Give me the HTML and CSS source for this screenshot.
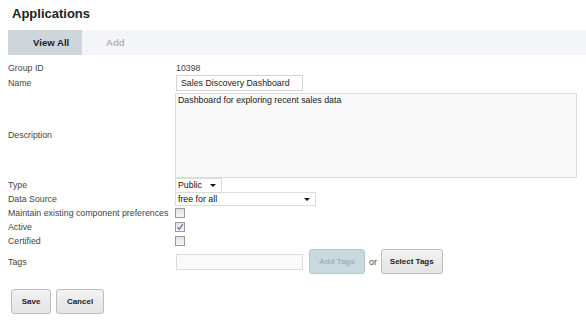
FILE: index.html
```html
<!DOCTYPE html>
<html lang="en">
<head>
    <meta charset="UTF-8">
    <title>Applications</title>
    <link rel="stylesheet" href="styles.css">
</head>
<body>
    <h2>Applications</h2>
    <div class="tabs">
        <a class="tab active">View All</a>
        <a class="tab">Add</a>
    </div>
    <form class="app-form">
        <div class="row">
            <label>Group ID</label>
            <span class="value">10398</span>
        </div>
        <div class="row row-name">
            <label for="name">Name</label>
            <input type="text" id="name" class="text-input" value="Sales Discovery Dashboard">
        </div>
        <div class="row row-desc">
            <label for="desc">Description</label>
            <textarea id="desc">Dashboard for exploring recent sales data</textarea>
        </div>
        <div class="row">
            <label>Type</label>
            <div class="select select-type">Public<span class="caret"></span></div>
        </div>
        <div class="row">
            <label>Data Source</label>
            <div class="select select-source">free for all<span class="caret"></span></div>
        </div>
        <div class="row row-check">
            <label>Maintain existing component preferences</label>
            <span class="checkbox"></span>
        </div>
        <div class="row row-check">
            <label>Active</label>
            <span class="checkbox"><svg width="8" height="8" viewBox="0 0 8 8"><path d="M1.5 4.2 L3.2 6.3 L6.8 1.2" fill="none" stroke="#4a5ea8" stroke-width="1.1"/></svg></span>
        </div>
        <div class="row row-check">
            <label>Certified</label>
            <span class="checkbox"></span>
        </div>
        <div class="row row-tags">
            <label for="tags">Tags</label>
            <input type="text" id="tags" class="tag-input">
            <button type="button" class="btn btn-disabled">Add Tags</button>
            <span class="or">or</span>
            <button type="button" class="btn">Select Tags</button>
        </div>
        <div class="actions">
            <button type="button" class="btn btn-save">Save</button>
            <button type="button" class="btn btn-cancel">Cancel</button>
        </div>
    </form>
</body>
</html>
```
FILE: styles.css
```css
body {
    font-family: "Liberation Sans", Arial, sans-serif;
    font-size: 8.8px;
    color: #444;
    margin: 0;
    padding: 0 0 0 8px;
    background: #fff;
}
h2 {
    margin: 0;
    padding: 6px 4px 0;
    font-size: 13px;
    line-height: 16px;
    color: #222;
}
.tabs {
    display: flex;
    height: 25px;
    margin-top: 8px;
    background: #f4f5f9;
}
.tab {
    display: flex;
    align-items: center;
    padding-left: 24px;
    font-size: 9.6px;
    font-weight: bold;
    color: #b2b2b2;
}
.tab.active {
    box-sizing: border-box;
    width: 74px;
    padding-left: 25px;
    background: #cfd6db;
    color: #222;
}
.app-form {
    margin-top: 6px;
}
.row {
    display: flex;
    align-items: center;
    height: 14px;
}
.row label {
    width: 167px;
    flex: none;
}
.value {
    padding-left: 1px;
}
.row-name {
    height: 16px;
}
.text-input {
    box-sizing: border-box;
    width: 127px;
    height: 16px;
    margin: 0 0 0 1px;
    padding: 0 4px;
    border: 1px solid #d4d4d4;
    font: inherit;
    color: #222;
    background: #fff;
}
.row-desc {
    height: 87px;
}
textarea {
    box-sizing: border-box;
    width: 402px;
    height: 85px;
    margin: 1px 0 0;
    padding: 1px 2px;
    border: 1px solid #dcdcdc;
    background: #f8f8f8;
    font: inherit;
    color: #222;
    resize: none;
}
.select {
    position: relative;
    box-sizing: border-box;
    height: 14px;
    line-height: 12px;
    padding: 0 2px;
    border: 1px solid #dcdcdc;
    border-bottom-color: #fff;
    color: #111;
    background: #fff;
}
.select-type {
    width: 47px;
}
.select-source {
    width: 141px;
    border-bottom-color: #dcdcdc;
}
.caret {
    position: absolute;
    right: 5px;
    top: 5px;
    border-left: 3px solid transparent;
    border-right: 3px solid transparent;
    border-top: 3px solid #111;
}
.row-check {
    height: 14px;
}
.checkbox {
    box-sizing: border-box;
    display: flex;
    align-items: center;
    justify-content: center;
    width: 10px;
    height: 10px;
    border: 1px solid #9a9a9a;
    background: linear-gradient(#e2e2e2, #f4f4f4);
}
.row-tags {
    height: 27px;
}
.tag-input {
    box-sizing: border-box;
    width: 127px;
    height: 16px;
    margin: 0 6px 0 1px;
    border: 1px solid #dadada;
    background: #fafafa;
}
.btn {
    box-sizing: border-box;
    height: 25px;
    padding: 0 8px;
    border: 1px solid #bdbdbd;
    border-radius: 3px;
    background: linear-gradient(#f2f2f2, #e4e4e4);
    font-family: "Liberation Sans", Arial, sans-serif;
    font-size: 8px;
    font-weight: bold;
    color: #222;
}
.btn-disabled {
    width: 56px;
    background: #c9d9e0;
    border-color: #b3c6cf;
    color: #9fb2bc;
}
.or {
    margin: 0 4px 0 4px;
}
.actions {
    display: flex;
    gap: 5px;
    margin: 14px 0 0 3px;
}
.btn-save {
    width: 40px;
}
.btn-cancel {
    width: 48px;
}
```
